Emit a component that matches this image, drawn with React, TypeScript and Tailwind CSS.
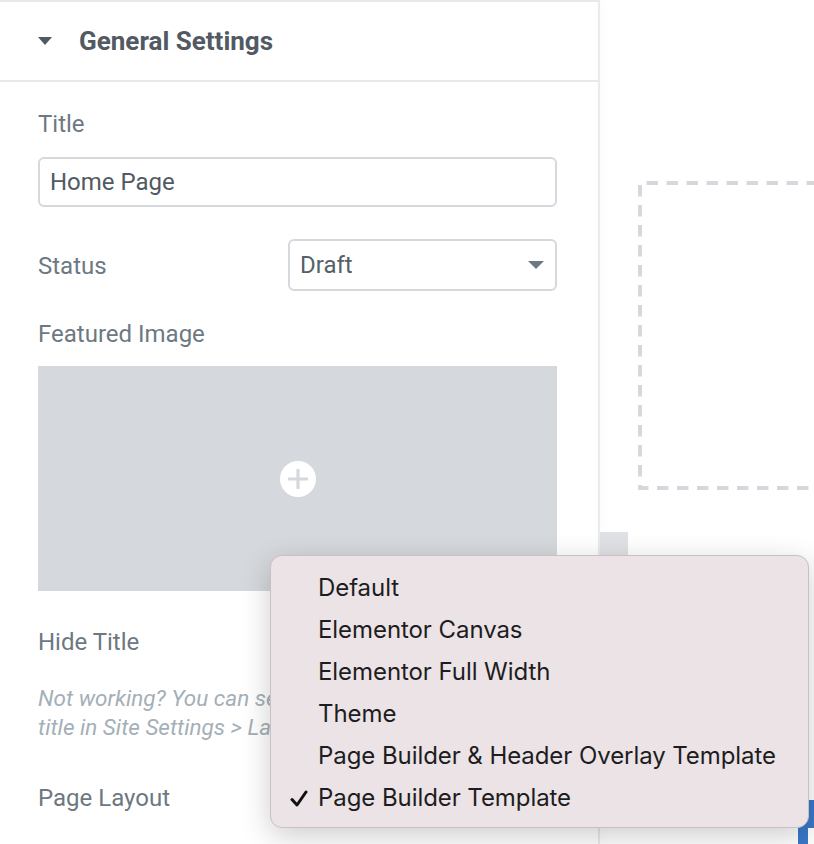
import React from "react";

const items = [
  "Default",
  "Elementor Canvas",
  "Elementor Full Width",
  "Theme",
  "Page Builder & Header Overlay Template",
  "Page Builder Template",
];

export default function App() {
  return (
    <div
      className="relative w-[814px] h-[844px] overflow-hidden bg-white flex"
      style={{ fontFamily: "Roboto, 'Noto Sans', sans-serif" }}
    >
      {/* Left panel */}
      <div className="w-[598px] shrink-0 flex flex-col border-t-2 border-[#e6e8ea] bg-white">
        <div className="h-[80px] flex items-center border-b-2 border-[#e6e8ea]">
          <svg width="14" height="8" viewBox="0 0 14 8" className="ml-[38px]">
            <path d="M0 0 L14 0 L7 8 Z" fill="#515962" />
          </svg>
          <span className="ml-[27px] text-[26px] font-bold text-[#515962] leading-none">
            General Settings
          </span>
        </div>
        <div className="pl-[38px] pr-[41px] pt-[27px] flex flex-col text-[24px] text-[#6d7882]">
          <div className="leading-[30px] h-[30px]">Title</div>
          <div className="mt-[18px] h-[50px] border-2 border-[#d5d8dc] rounded-[6px] flex items-center pl-[10px] text-[#515962]">
            Home Page
          </div>
          <div className="mt-[32px] h-[52px] flex items-center">
            <div className="w-[250px] leading-[30px] mt-[2px]">Status</div>
            <div className="flex-1 h-full border-2 border-[#d5d8dc] rounded-[6px] flex items-center justify-between pl-[10px] pr-[11px] text-[#556068]">
              <span>Draft</span>
              <svg width="16" height="8" viewBox="0 0 16 8">
                <path d="M0 0 L16 0 L8 8 Z" fill="#6d7882" />
              </svg>
            </div>
          </div>
          <div className="mt-[28px] leading-[30px] h-[30px]">Featured Image</div>
          <div className="mt-[17px] h-[225px] bg-[#d5d8dc] flex items-center justify-center">
            <div className="w-[36px] h-[36px] rounded-full bg-white flex items-center justify-center">
              <svg width="20" height="20" viewBox="0 0 20 20">
                <path d="M10 1 V19 M1 10 H19" stroke="#d5d8dc" strokeWidth="3.2" strokeLinecap="round" />
              </svg>
            </div>
          </div>
          <div className="mt-[36px] leading-[30px] h-[30px]">Hide Title</div>
          <div className="mt-[27px] text-[22.5px] italic leading-[29px] text-[#a4afb7] whitespace-nowrap">
            <div>Not working? You can set a different selector for the</div>
            <div>title in Site Settings &gt; Layout</div>
          </div>
          <div className="mt-[41px] leading-[30px] h-[30px]">Page Layout</div>
        </div>
      </div>
      {/* divider */}
      <div className="w-[2px] shrink-0 bg-[#e9eaec] shadow-[3px_0_8px_rgba(0,0,0,0.05)]" />
      {/* canvas */}
      <div className="flex-1 relative">
        <svg width="200" height="309" className="ml-[38px] mt-[181px] block">
          <path
            d="M200 2 H2 V307 H200"
            fill="none"
            stroke="#d5d8dc"
            strokeWidth="4"
            strokeDasharray="11.5 8.5"
          />
        </svg>
      </div>

      {/* panel toggle */}
      <div className="absolute left-[600px] top-[532px] w-[28px] h-[24px] bg-[#dfe1e4]" />

      {/* blue element bottom right */}
      <div className="absolute left-[798px] top-[800px] w-[16px] h-[44px] bg-[#3a78c9]">
        <div className="ml-[10px] mt-[28px] w-[6px] h-[16px] bg-white" />
      </div>

      {/* native dropdown menu */}
      <div
        className="absolute left-[270px] top-[555px] w-[539px] h-[273px] rounded-[12px] bg-[#ece3e6] border border-[#c8c1c4] shadow-[0_8px_30px_rgba(0,0,0,0.2)] pt-[11px]"
        style={{ fontFamily: "Inter, 'Noto Sans', sans-serif" }}
      >
        {items.map((it, i) => (
          <div key={it} className="relative h-[42px] flex items-center pl-[47px] text-[24px] tracking-[-0.07px] text-[#1d1d1f]">
            {i === items.length - 1 && (
              <svg width="18" height="17" viewBox="0 0 18 17" className="absolute left-[19px] top-[13px]">
                <path d="M2 9.5 L7 15 L16 2" fill="none" stroke="#111" strokeWidth="3" strokeLinecap="round" strokeLinejoin="round" />
              </svg>
            )}
            <span>{it}</span>
          </div>
        ))}
      </div>
    </div>
  );
}
